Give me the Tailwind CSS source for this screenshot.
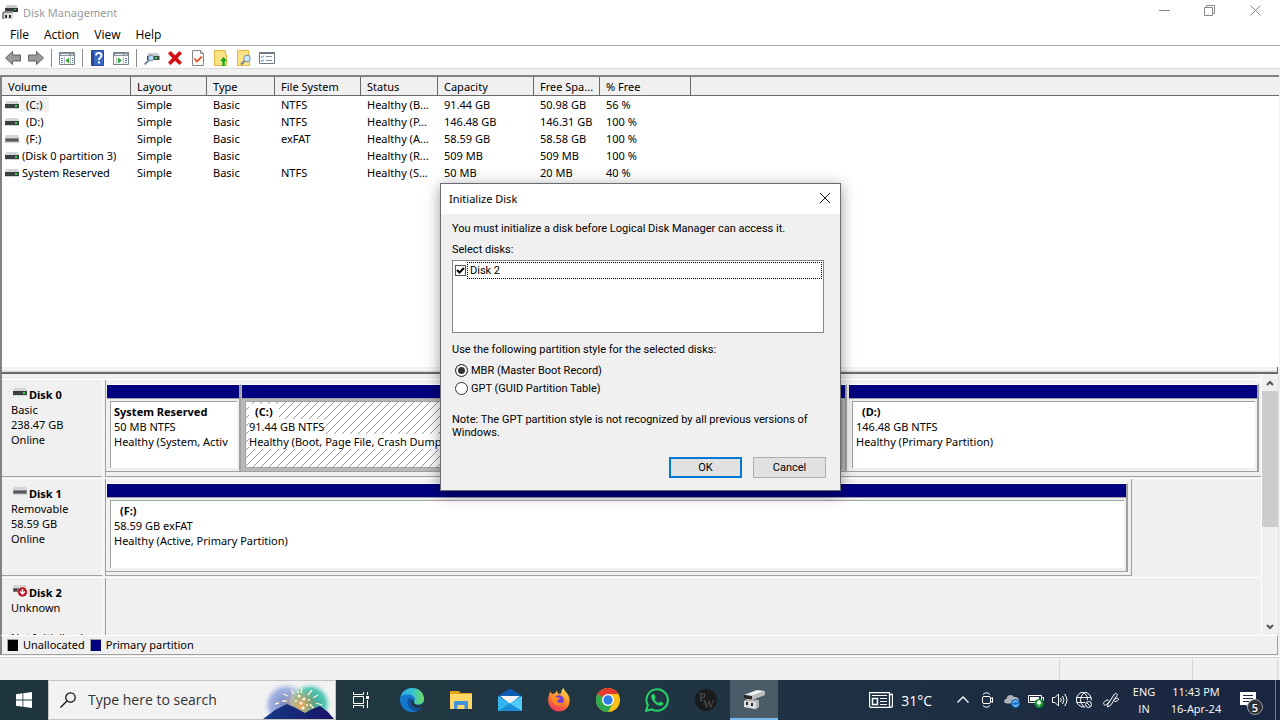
<!DOCTYPE html>
<html lang="en">
<head>
  <meta charset="UTF-8" />
  <meta name="viewport" content="width=device-width, initial-scale=1.0"/>
  <title>Disk Management</title>
  <script src="https://cdn.jsdelivr.net/npm/@tailwindcss/browser@4"></script>
</head>
<body class="h-screen flex flex-col overflow-hidden bg-[#f0f0f0] font-['Noto_Sans','Open_Sans',sans-serif] text-[11px] leading-[15px] text-black">

  <!-- Shared drive icons -->
  <svg class="hidden">
    <symbol id="drive" viewBox="0 0 14 8">
      <path d="M1 0h12l1 3H0z" fill="#d3d5d7"/>
      <path d="M0 3h14v4H0z" fill="#3c3f42"/>
      <path d="M0 7h14v1H0z" fill="#d0d2d4"/>
      <path d="M10 4h2v2h-2z" fill="#2ee04a"/>
    </symbol>
    <symbol id="removable" viewBox="0 0 14 8">
      <path d="M1 0h12l1 3H0z" fill="#d3d5d7"/>
      <path d="M0 3h14v4H0z" fill="#8b8e91"/>
      <path d="M1 4h12v2H1z" fill="#55585a"/>
      <path d="M0 7h14v1H0z" fill="#d0d2d4"/>
    </symbol>
  </svg>

  <!-- Title bar -->
  <header class="flex h-6 shrink-0 items-center bg-white pr-[2px]">
    <svg class="ml-[2px] h-4 w-4" viewBox="0 0 16 16">
      <path d="M5 1h9l2 3H3z" fill="#c9cbcd"/>
      <path d="M3 4h13v4H3z" fill="#37393b"/>
      <path d="M12 5h2v1h-2z" fill="#3fd35a"/>
      <path d="M0 9l2-2h9v8H0z" fill="#8c8c8c"/>
      <path d="M2 9h9v6H2z" fill="#dcdcdc"/>
      <path d="M3 11h2v3H3zM7 11h2v3H7z" fill="#333"/>
    </svg>
    <h1 class="ml-[5px] flex-1 text-[#999]">Disk Management</h1>
    <div class="flex pb-[3px]">
      <button class="flex h-5 w-[46px] items-center justify-center" aria-label="Minimize"><svg class="h-[11px] w-[11px]" viewBox="0 0 11 11" stroke="#888"><path d="M0 5.500h11"/></svg></button>
      <button class="flex h-5 w-[45px] items-center justify-center" aria-label="Restore"><svg class="h-[11px] w-[11px]" viewBox="0 0 11 11" fill="none" stroke="#888"><path d="M.5 2.500h8v8h-8zM2.500 2.500v-2h8v8h-2"/></svg></button>
      <button class="flex h-5 w-[46px] items-center justify-center" aria-label="Close"><svg class="h-[11px] w-[11px]" viewBox="0 0 11 11" stroke="#888"><path d="M.5.5l10 10M10.500.5l-10 10"/></svg></button>
    </div>
  </header>

  <!-- Menu -->
  <nav class="flex h-[22px] shrink-0 items-center gap-[15px] border-b border-[#a8abb0] bg-white pb-px pl-[10px] font-['Open_Sans',sans-serif] text-[12px]">
    <button>File</button>
    <button>Action</button>
    <button>View</button>
    <button>Help</button>
  </nav>

  <!-- Toolbar -->
  <div class="flex h-[23px] shrink-0 items-center border-b border-[#dcdcdc] bg-white pt-px pl-px">
    <button class="flex w-[23px] justify-center" aria-label="Back"><svg class="h-4 w-4" viewBox="0 0 16 16"><path d="M.5 8L7.500 1.500v3.500h8v6h-8v3.500z" fill="#9a9a9a" stroke="#5f5f5f"/></svg></button>
    <button class="flex w-[23px] justify-center" aria-label="Forward"><svg class="h-4 w-4" viewBox="0 0 16 16"><path d="M15.500 8L8.500 1.500v3.500h-8v6h8v3.500z" fill="#9a9a9a" stroke="#5f5f5f"/></svg></button>
    <span class="flex w-2 justify-center"><span class="h-[18px] w-px bg-[#8c8c8c]"></span></span>
    <button class="flex w-[23px] justify-center" aria-label="Console tree">
      <svg class="h-4 w-4" viewBox="0 0 16 16"><path d="M.5 2.500h15v12H.5z" fill="#fff" stroke="#78828c"/><path d="M1 3h14v3H1z" fill="#8b949d"/><path d="M2 4h8v1H2zM12 4h2v1h-2z" fill="#e6ebf0"/><path d="M5.500 7v7M11.500 7v7" stroke="#b4bcc4"/><path d="M2 8.500h2M2 10.500h2M2 12.500h2M13 8.500h1M13 10.500h1M13 12.500h1" stroke="#4d7fc0"/><path d="M10 7.500v6L6.500 10.500z" fill="#2da52d"/></svg>
    </button>
    <span class="flex w-2 justify-center"><span class="h-[18px] w-px bg-[#8c8c8c]"></span></span>
    <button class="flex w-[23px] justify-center" aria-label="Help">
      <svg class="h-4 w-4" viewBox="0 0 16 16"><path d="M1.500.5h12v15h-12z" fill="#3d6cc8" stroke="#27489b"/><path d="M2 1h2v14H2z" fill="#2a4796"/><path d="M6 5.500c0-3.500 5.500-3.500 5.500 0 0 2.500-2.700 2-2.700 4.500" fill="none" stroke="#fff" stroke-width="1.800"/><path d="M8 11.500h2v2H8z" fill="#fff"/></svg>
    </button>
    <button class="flex w-[23px] justify-center" aria-label="Action pane">
      <svg class="h-4 w-4" viewBox="0 0 16 16"><path d="M.5 2.500h15v12H.5z" fill="#fff" stroke="#78828c"/><path d="M1 3h14v3H1z" fill="#8b949d"/><path d="M2 4h8v1H2zM12 4h2v1h-2z" fill="#e6ebf0"/><path d="M3.500 7v7M10.500 7v7" stroke="#b4bcc4"/><path d="M12 8.500h2M12 10.500h2M12 12.500h2" stroke="#4d7fc0"/><path d="M5 7.500v6l4-3z" fill="#2da52d"/></svg>
    </button>
    <span class="flex w-2 justify-center"><span class="h-[18px] w-px bg-[#8c8c8c]"></span></span>
    <button class="flex w-[23px] justify-center" aria-label="Rescan disks">
      <svg class="h-4 w-4" viewBox="0 0 16 16"><path d="M4 3h10l1.500 3H3z" fill="#c8cbce"/><path d="M3 6h12.500v4H3z" fill="#44484c"/><path d="M11 7h2v2h-2z" fill="#2ee04a"/><path d="M.7 14.300L5 10" stroke="#6c7f94" stroke-width="1.800"/><circle cx="7" cy="8" r="2.800" fill="#b8dbf5" stroke="#6b88a5"/></svg>
    </button>
    <button class="flex w-[23px] justify-center" aria-label="Delete"><svg class="h-4 w-4" viewBox="0 0 16 16"><path d="M1 3.500L3.500 1 8 5.300 12.500 1 15 3.500 10.700 8 15 12.500 12.500 15 8 10.700 3.500 15 1 12.500 5.300 8z" fill="#d40f14"/></svg></button>
    <button class="flex w-[23px] justify-center" aria-label="Properties"><svg class="h-4 w-4" viewBox="0 0 16 16"><path d="M2.500.5h8l3 3v12h-11z" fill="#fafafa" stroke="#888"/><path d="M10.500.5v3h3" fill="none" stroke="#888"/><path d="M4.500 8.500l2.500 3L12 6.500" fill="none" stroke="#e8562a" stroke-width="1.800"/></svg></button>
    <button class="flex w-[23px] justify-center" aria-label="Open"><svg class="h-4 w-4" viewBox="0 0 16 16"><path d="M1.500.5h11v4h1v11h-12z" fill="#fbe283" stroke="#e0b93e"/><path d="M10.500 7l3.500 4h-2.200v5H9.300v-5H7z" fill="#18a528"/></svg></button>
    <button class="flex w-[23px] justify-center" aria-label="Explore"><svg class="h-4 w-4" viewBox="0 0 16 16"><path d="M1.500.5h11v4h1v11h-12z" fill="#fbe283" stroke="#e0b93e"/><path d="M5 14.500l4-4" stroke="#6f7f90" stroke-width="1.800"/><circle cx="11" cy="8.500" r="3.300" fill="#cde7f7" stroke="#7b93a8"/></svg></button>
    <button class="flex w-[23px] justify-center" aria-label="Options"><svg class="h-4 w-4" viewBox="0 0 16 16"><path d="M.5 2.500h15v11H.5z" fill="#fff" stroke="#6e7a86"/><path d="M0 2h16v2H0z" fill="#6e7a86"/><path d="M2 6.500l1.200 1L5 5.500M2 10.500l1.200 1L5 9.500" fill="none" stroke="#2a7fd0"/><path d="M7 6.500h6M7 10.500h6" stroke="#8b949d"/></svg></button>
  </div>

  <!-- Volume list -->
  <section class="mt-[6px] mr-px flex-1 overflow-hidden border-t-2 border-l-2 border-[#838383] bg-white">
    <table class="w-full table-fixed border-separate border-spacing-0 text-left">
      <colgroup>
        <col class="w-[129px]"><col class="w-[76px]"><col class="w-[68px]"><col class="w-[86px]"><col class="w-[77px]"><col class="w-[96px]"><col class="w-[66px]"><col class="w-[91px]"><col>
      </colgroup>
      <thead>
        <tr class="h-[19px] bg-[#f0f0f0]">
          <th class="border-r border-b border-[#696969] px-[6px] font-normal">Volume</th>
          <th class="border-r border-b border-[#696969] px-[6px] font-normal">Layout</th>
          <th class="border-r border-b border-[#696969] px-[6px] font-normal">Type</th>
          <th class="border-r border-b border-[#696969] px-[6px] font-normal">File System</th>
          <th class="border-r border-b border-[#696969] px-[6px] font-normal">Status</th>
          <th class="border-r border-b border-[#696969] px-[6px] font-normal">Capacity</th>
          <th class="border-r border-b border-[#696969] pl-[6px] font-normal whitespace-nowrap">Free Spa...</th>
          <th class="border-r border-b border-[#696969] px-[6px] font-normal">% Free</th>
          <th class="border-b border-[#696969]"></th>
        </tr>
      </thead>
      <tbody>
        <tr class="h-[17px]">
          <td class="pl-[3px]"><div class="flex items-center"><svg class="h-2 w-[14px]"><use href="#drive"/></svg><span class="ml-px bg-[#f0f0f0] px-[6px]">(C:)</span></div></td>
          <td class="px-[6px]">Simple</td><td class="px-[6px]">Basic</td><td class="px-[6px]">NTFS</td>
          <td class="pl-[6px] whitespace-nowrap">Healthy (B...</td><td class="px-[6px]">91.44 GB</td><td class="pl-[6px] whitespace-nowrap">50.98 GB</td><td class="px-[6px]">56 %</td><td></td>
        </tr>
        <tr class="h-[17px]">
          <td class="pl-[3px]"><div class="flex items-center"><svg class="h-2 w-[14px]"><use href="#drive"/></svg><span class="ml-px px-[6px]">(D:)</span></div></td>
          <td class="px-[6px]">Simple</td><td class="px-[6px]">Basic</td><td class="px-[6px]">NTFS</td>
          <td class="pl-[6px] whitespace-nowrap">Healthy (P...</td><td class="px-[6px]">146.48 GB</td><td class="pl-[6px] whitespace-nowrap">146.31 GB</td><td class="px-[6px]">100 %</td><td></td>
        </tr>
        <tr class="h-[17px]">
          <td class="pl-[3px]"><div class="flex items-center"><svg class="h-2 w-[14px]"><use href="#removable"/></svg><span class="ml-px px-[6px]">(F:)</span></div></td>
          <td class="px-[6px]">Simple</td><td class="px-[6px]">Basic</td><td class="px-[6px]">exFAT</td>
          <td class="pl-[6px] whitespace-nowrap">Healthy (A...</td><td class="px-[6px]">58.59 GB</td><td class="pl-[6px] whitespace-nowrap">58.58 GB</td><td class="px-[6px]">100 %</td><td></td>
        </tr>
        <tr class="h-[17px]">
          <td class="pl-[3px]"><div class="flex items-center"><svg class="h-2 w-[14px] shrink-0"><use href="#drive"/></svg><span class="ml-[3px] whitespace-nowrap">(Disk 0 partition 3)</span></div></td>
          <td class="px-[6px]">Simple</td><td class="px-[6px]">Basic</td><td></td>
          <td class="pl-[6px] whitespace-nowrap">Healthy (R...</td><td class="px-[6px]">509 MB</td><td class="pl-[6px] whitespace-nowrap">509 MB</td><td class="px-[6px]">100 %</td><td></td>
        </tr>
        <tr class="h-[17px]">
          <td class="pl-[3px]"><div class="flex items-center"><svg class="h-2 w-[14px]"><use href="#drive"/></svg><span class="ml-[3px] whitespace-nowrap">System Reserved</span></div></td>
          <td class="px-[6px]">Simple</td><td class="px-[6px]">Basic</td><td class="px-[6px]">NTFS</td>
          <td class="pl-[6px] whitespace-nowrap">Healthy (S...</td><td class="px-[6px]">50 MB</td><td class="pl-[6px] whitespace-nowrap">20 MB</td><td class="px-[6px]">40 %</td><td></td>
        </tr>
      </tbody>
    </table>
  </section>

  <!-- Splitter -->
  <div class="mr-[2px] h-[7px] shrink-0 border-r border-b-2 border-l-2 border-[#696969] border-l-[#838383] bg-[#f0f0f0] pt-[2px]"><div class="h-px bg-white"></div><div class="h-[2px] bg-[#e3e3e3]"></div></div>

  <!-- Graphical view -->
  <main class="mr-px flex h-[261px] shrink-0 border-l-2 border-[#838383]">
    <div class="mt-[5px] flex-1 overflow-hidden">

      <!-- Disk 0 -->
      <div class="flex h-[98px] border-t border-white">
        <div class="w-[101px] border-r border-b border-r-white border-b-[#a0a0a0] pt-[7px] pl-[9px]">
          <div class="flex font-bold"><svg class="mt-px mr-[2px] ml-[2px] h-2 w-[14px]"><use href="#drive"/></svg>Disk 0</div>
          <p>Basic</p><p>238.47 GB</p><p>Online</p>
        </div>
        <div class="ml-[2px] flex flex-1 border-b border-l border-[#a0a0a0] pt-[4px] pb-[4px]">
          <div class="flex w-[135px] flex-col border-r-2 border-b border-[#a0a0a0] border-t border-t-white pl-px">
            <div class="h-[14px] border-b border-[#a0a0a0] bg-[#000080]"></div>
            <div class="mt-[2px] mr-[2px] mb-[3px] ml-[3px] flex-1 overflow-hidden border-t border-l border-[#a0a0a0] bg-white pt-[2px] pl-[3px] whitespace-nowrap">
              <p class="font-bold">System Reserved</p><p>50 MB NTFS</p><p>Healthy (System, Activ</p>
            </div>
          </div>
          <div class="flex w-[606px] flex-col border-r-2 border-b border-[#a0a0a0] border-t border-t-white bg-[#b8b8b8] pl-px">
            <div class="h-[14px] border-b border-[#a0a0a0] bg-[#000080]"></div>
            <div class="relative mt-[2px] mr-[3px] mb-[3px] ml-[3px] flex-1 overflow-hidden border border-[#a0a0a0] bg-white pt-[2px] pl-[3px] whitespace-nowrap">
              <svg class="absolute inset-0 h-full w-full"><defs><pattern id="hatch" width="8" height="8" patternUnits="userSpaceOnUse"><path d="M-1 9L9-1M-1 1L1-1M7 9L9 7" stroke="#999" stroke-width="1"/></pattern></defs><rect width="100%" height="100%" fill="url(#hatch)"/></svg>
              <p class="relative font-bold"><span class="bg-white px-[6px]">(C:)</span></p><p class="relative"><span class="bg-white">91.44 GB NTFS</span></p><p class="relative"><span class="bg-white">Healthy (Boot, Page File, Crash Dump, Primary Partition)</span></p>
            </div>
          </div>
          <div class="flex flex-1 flex-col border-r-2 border-b border-[#a0a0a0] border-t border-t-white pl-[2px]">
            <div class="h-[14px] border-b border-[#a0a0a0] bg-[#000080]"></div>
            <div class="mt-[2px] mr-[2px] mb-[3px] ml-[3px] flex-1 overflow-hidden border-t border-l border-[#a0a0a0] bg-white pt-[2px] pl-[3px] whitespace-nowrap">
              <p class="pl-[6px] font-bold">(D:)</p><p>146.48 GB NTFS</p><p>Healthy (Primary Partition)</p>
            </div>
          </div>
          <div class="w-[2px]"></div>
        </div>
      </div>

      <!-- Disk 1 -->
      <div class="mt-px flex h-[98px] border-t border-white">
        <div class="w-[101px] border-r border-b border-r-white border-b-[#a0a0a0] pt-[7px] pl-[9px]">
          <div class="flex font-bold"><svg class="mt-px mr-[2px] ml-[2px] h-2 w-[14px]"><use href="#removable"/></svg>Disk 1</div>
          <p>Removable</p><p>58.59 GB</p><p>Online</p>
        </div>
        <div class="ml-[2px] flex flex-1 border-l border-[#a0a0a0]">
          <div class="flex flex-1 border-r border-b border-[#a0a0a0] pt-[4px] pr-[3px] pb-[3px]">
            <div class="flex flex-1 flex-col border-r-2 border-b border-[#a0a0a0] border-t border-t-white pl-px">
              <div class="h-[14px] border-b border-[#a0a0a0] bg-[#000080]"></div>
              <div class="mt-[2px] mr-[2px] mb-[3px] ml-[3px] flex-1 overflow-hidden border-t border-l border-[#a0a0a0] bg-white pt-[2px] pl-[3px] whitespace-nowrap">
                <p class="pl-[6px] font-bold">(F:)</p><p>58.59 GB exFAT</p><p>Healthy (Active, Primary Partition)</p>
              </div>
            </div>
          </div>
          <div class="w-[129px]"></div>
        </div>
      </div>

      <!-- Disk 2 -->
      <div class="mt-px flex h-[98px] border-t border-white">
        <div class="w-[101px] border-r border-white pt-[7px] pl-[9px]">
          <div class="flex font-bold">
            <svg class="mr-px ml-[2px] h-3 w-[15px]" viewBox="0 0 15 12"><path d="M1 0h12v3H0z" fill="#d3d5d7"/><path d="M0 3h6v4H0z" fill="#777a7d"/><path d="M1 4h3v2H1z" fill="#3c3f42"/><circle cx="9.500" cy="7" r="4.700" fill="#c01020"/><path d="M9.500 4v4M7 6.500l2.500 2.500L12 6.500" fill="none" stroke="#fff" stroke-width="1.500"/></svg>Disk 2
          </div>
          <p>Unknown</p><p>&nbsp;</p><p>Not Initialized</p>
        </div>
        <div class="ml-[2px] flex-1 border-l border-[#a0a0a0]"></div>
      </div>
    </div>

    <!-- Scroll bar -->
    <div class="flex w-[18px] flex-col border-x border-l-white border-r-[#e3e3e3] bg-[#f0f0f0]">
      <button class="flex h-[17px] items-center justify-center" aria-label="Scroll up"><svg class="h-[6px] w-2" viewBox="0 0 8 6" fill="none" stroke="#555" stroke-width="2"><path d="M1 5l3-3 3 3"/></svg></button>
      <div class="h-[136px] bg-[#cdcdcd]"></div>
      <div class="flex-1"></div>
      <button class="flex h-[17px] items-center justify-center" aria-label="Scroll down"><svg class="h-[6px] w-2" viewBox="0 0 8 6" fill="none" stroke="#555" stroke-width="2"><path d="M1 1l3 3 3-3"/></svg></button>
    </div>
  </main>

  <!-- Legend -->
  <div class="mr-[2px] flex h-5 shrink-0 items-center border-t border-r border-b border-l-2 border-t-white border-r-[#a0a0a0] border-b-[#a0a0a0] border-l-[#838383] pb-px pl-[5px]">
    <span class="h-3 w-[11px] border-t border-l border-[#a0a0a0] bg-black"></span><span class="ml-[5px]">Unallocated</span>
    <span class="ml-[5px] h-3 w-[11px] border-t border-l border-[#a0a0a0] bg-[#000080]"></span><span class="ml-[5px]">Primary partition</span>
  </div>

  <!-- Status bar -->
  <footer class="mt-px flex h-[24px] shrink-0 border-t border-white">
    <div class="flex flex-1 border-t border-[#d7d7d7] pt-px">
      <div class="flex-1 border-r border-[#d7d7d7]"></div>
      <div class="w-[133px] border-r border-[#d7d7d7]"></div>
      <div class="w-[85px] border-r border-[#d7d7d7]"></div>
      <div class="w-[2px]"></div>
    </div>
  </footer>

  <!-- Taskbar -->
  <div class="flex h-10 shrink-0 items-stretch bg-linear-to-r from-[#20363f] via-[#203643] to-[#1a2541] font-['Open_Sans',sans-serif] text-white">
    <button class="flex w-12 items-center justify-center" aria-label="Start"><svg class="h-4 w-4" viewBox="0 0 16 16" fill="#fff"><path d="M0 2.200L6.500 1.300v6.200H0zM7.300 1.200L16 0v7.500H7.300zM0 8.400h6.500v6.300L0 13.800zM7.300 8.400H16V16l-8.700-1.200z"/></svg></button>
    <label class="flex w-[288px] items-center border border-[#c4c4c4] bg-[#f2f2f2] pl-[11px] text-black">
      <svg class="h-4 w-4" viewBox="0 0 16 16" fill="none" stroke="#111" stroke-width="1.300"><circle cx="10.500" cy="5.500" r="4.700"/><path d="M7.200 8.800L.5 15.500"/></svg>
      <input type="text" placeholder="Type here to search" aria-label="Search" class="ml-3 w-0 flex-1 text-[14px] leading-5 outline-none placeholder:text-[#333]">
      <svg class="h-[38px] w-[72px]" viewBox="0 0 72 38">
        <defs>
          <radialGradient id="glow"><stop offset="0" stop-color="#f0a860"/><stop offset="1" stop-color="#f0a860" stop-opacity="0"/></radialGradient>
          <radialGradient id="skyLeft"><stop offset="0" stop-color="#6f84bd"/><stop offset=".7" stop-color="#a4b4e2"/><stop offset="1" stop-color="#dfe4f2" stop-opacity="0"/></radialGradient>
          <radialGradient id="skyRight"><stop offset="0" stop-color="#229a8b"/><stop offset=".7" stop-color="#5cc8b6"/><stop offset="1" stop-color="#d5efeb" stop-opacity="0"/></radialGradient>
          <linearGradient id="hill"><stop offset="0" stop-color="#143d85"/><stop offset="1" stop-color="#1b1066"/></linearGradient>
        </defs>
        <circle cx="23" cy="24" r="23" fill="url(#skyLeft)"/>
        <circle cx="47" cy="23" r="22" fill="url(#skyRight)"/>
        <circle cx="38" cy="24" r="17" fill="url(#glow)"/>
        <g stroke="#fff4d6" stroke-width="1.300"><path d="M31 13l-3-4M25 15l-5-2M24 20h-5M16 22l-4 1M38 12l1-5M45 14l4-5M50 17l5-3M53 22l6 2M47 23l4 5"/></g>
        <g fill="#fff4d6"><circle cx="36" cy="15" r="1.500"/><circle cx="41" cy="18" r="1.500"/><circle cx="33" cy="20" r="1"/><circle cx="38" cy="22" r="1.500"/><circle cx="44" cy="24" r="1"/><circle cx="40" cy="27" r="1.500"/><circle cx="35" cy="11" r="1"/><circle cx="46" cy="19" r="1"/></g>
        <path d="M0 38l12-9 12-6 9 4 9 5 7-4 8-3 8 6 6 7z" fill="url(#hill)"/>
      </svg>
    </label>
    <button class="flex w-[51px] items-center justify-center pr-[2px]" aria-label="Task view"><svg class="h-4 w-4" viewBox="0 0 16 16" fill="none" stroke="#fff"><path d="M.5 0v2.500h10V0M.5 4.500h10v7H.5zM.5 16v-2.500h10V16M14.500 0v3M14.500 8v8"/><path d="M13 4h3v3h-3z" fill="#fff" stroke="none"/></svg></button>

    <button class="flex w-[49px] items-center justify-center" aria-label="Edge">
      <svg class="h-6 w-6" viewBox="0 0 24 24"><defs><linearGradient id="edgeTop"><stop offset="0" stop-color="#29a8e8"/><stop offset=".5" stop-color="#37c4cf"/><stop offset="1" stop-color="#70dc5c"/></linearGradient></defs>
        <circle cx="12" cy="12" r="12" fill="#1478cf"/><path d="M.5 9C2 3.500 6.500 0 12 0c7 0 12 5 12 10.500 0 4-3 6-6 6-2.500 0-4-1-4-2 0-.8 1-1.200 1-3C15 8.500 12 6.500 8.500 6.500 5 6.500 2 7 .5 9z" fill="url(#edgeTop)"/><path d="M9 10c-3 3.500-1.500 9.500 3 12 4 2 8 .5 10.500-3.500-5 2-9.500.5-11-3-.8-2-.3-3.500.5-4.500-1-.9-2-1.500-3-1z" fill="#164f9e"/><path d="M14 14.500c0 1.500 2 2.500 4.500 2.500 2 0 4.500-1 5.500-3l-1.500 5c-5 2-9.500.5-11-3-.7-2-.2-3.500.7-4.500 1 .5 1.300 1 1.800 3z" fill="#20363f"/></svg>
    </button>
    <button class="flex w-[49px] items-center justify-center" aria-label="File Explorer">
      <svg class="h-6 w-6" viewBox="0 0 24 24"><path d="M1 3h9l1.500 2H23v3H1z" fill="#e2a315"/><path d="M1 6h22v15H1z" fill="#ffd868"/><path d="M5 21v-6.500c0-1 .5-1.500 1.500-1.500h11c1 0 1.500.5 1.500 1.500V21h-3.500v-4h-7v4z" fill="#3e94dc"/></svg>
    </button>
    <button class="flex w-[49px] items-center justify-center" aria-label="Mail">
      <svg class="h-6 w-6" viewBox="0 0 24 24"><path d="M0 8L12 .5 24 8v6H0z" fill="#0d5db5"/><path d="M2 8h20l-10 8z" fill="#f2f2f2"/><path d="M0 8l12 7.500L24 8v15H0z" fill="#35b5ed"/><path d="M24 8v15H0z" fill="#50cbf7"/><path d="M0 23l12-7.500L24 23z" fill="#1a8ddd"/></svg>
    </button>
    <button class="flex w-[49px] items-center justify-center" aria-label="Firefox">
      <svg class="h-6 w-6" viewBox="0 0 24 24"><defs><linearGradient id="fox" x1=".8" y1="0" x2=".3" y2="1"><stop offset="0" stop-color="#ffe14a"/><stop offset=".5" stop-color="#ff8a2b"/><stop offset="1" stop-color="#ef2d5d"/></linearGradient></defs>
        <path d="M3 3.500l2.500 2.500 3-1 1-2.500 2 3.500 3-1c-.5-2 .5-4 2-5 .5 3 3.500 4.500 5 7.500 3.500 7.500-1 16-10 16C4 23.500-1 15 2 7z" fill="url(#fox)"/><circle cx="12" cy="12.300" r="5" fill="#7a3fd5"/><path d="M4.500 9c2-1.500 4.500-.5 5.500.5l3 .5c0 1.500-3 1.500-3 3 1 2.500 4 2.500 6.500 1.500-2 4-9 4-11-1z" fill="#ff8b23"/></svg>
    </button>
    <button class="flex w-[49px] items-center justify-center" aria-label="Chrome">
      <svg class="h-6 w-6" viewBox="0 0 24 24"><circle cx="12" cy="12" r="12" fill="#fbc116"/><path d="M12 12L1.600 6A12 12 0 0 1 22.400 6H12z" fill="#e33b2e"/><path d="M1.600 6A12 12 0 0 0 12 24l5.200-9L12 12 6.800 15z" fill="#2da94f"/><path d="M1.600 6l5.200 9L12 8V6z" fill="#2da94f"/><path d="M1.600 6H12v6L6.800 9z" fill="#e33b2e"/><circle cx="12" cy="12" r="6" fill="#fff"/><circle cx="12" cy="12" r="4.700" fill="#2f7de9"/></svg>
    </button>
    <button class="flex w-[49px] items-center justify-center" aria-label="WhatsApp">
      <svg class="h-6 w-6" viewBox="0 0 24 24"><path d="M1.200 22.800l1.600-5.700A10.700 10.700 0 1 1 7 21.300z" fill="none" stroke="#25d366" stroke-width="2"/><path d="M8 5.800c-2.200 1-2.200 3.600-.8 6 2 3.400 5.200 6.200 8.800 5.900 1.500-.3 2.500-1.300 2.300-2.800l-3-1.500-1.600 1.700c-2-.8-3.300-2.200-4.200-3.900L10.700 10 9.300 6.300z" fill="#25d366"/></svg>
    </button>
    <button class="flex w-[49px] items-center justify-center" aria-label="PW">
      <svg class="h-6 w-6" viewBox="0 0 24 24"><circle cx="12" cy="12" r="11" fill="#1b1b1d"/><text x="5" y="13" font-family="Liberation Serif" font-size="12" fill="#555">P</text><text x="9" y="20" font-family="Liberation Serif" font-size="12" fill="#555">W</text></svg>
    </button>
    <button class="flex w-12 items-center justify-center border-b-2 border-[#76b9ed] bg-[#4b5c69]" aria-label="Disk Management">
      <svg class="h-6 w-6" viewBox="0 0 24 24"><path d="M2 8L15 3l8 1-13 5z" fill="#f0f0f0"/><path d="M2 8l8 1v4l-8-2z" fill="#292929"/><path d="M10 9l13-5v4l-13 5z" fill="#bcbcbc"/><path d="M2 14l3-2 12 1v7l-3 2-12-2z" fill="#b4b4b4"/><path d="M2 14l12 1v7L2 20z" fill="#dcdcdc"/><path d="M4 15h2v3H4zM9 16h2v3H9z" fill="#292929"/></svg>
    </button>

    <div class="flex-1"></div>

    <!-- Tray -->
    <button class="flex items-center text-[14px]">
      <svg class="mr-2 h-4 w-6" viewBox="0 0 24 16" fill="none" stroke="#fff"><path d="M.5.5h20v15H2.500c-1.500 0-2-1-2-2zM20.500 2.500h3v11c0 1.500-1 2-3 2" stroke-width="1.300"/><path d="M3 3.500h15M11 6.500h7M11 9.500h7M11 12.500h7"/><path d="M3.500 6.500h5v6h-5z" stroke-width="1.500"/></svg>
      31°C
    </button>
    <div class="ml-[24px] flex items-center gap-2">
      <button aria-label="Show hidden icons"><svg class="h-4 w-[14px]" viewBox="0 0 14 16" fill="none" stroke="#fff" stroke-width="1.300"><path d="M1.500 10.500L7 5l5.500 5.500"/></svg></button>
      <button class="ml-[2px]" aria-label="Meet now"><svg class="h-4 w-4" viewBox="0 0 16 16" fill="none" stroke="#fff"><rect x="2.500" y="4.500" width="8" height="7" rx="1.500"/><path d="M10.500 7l2-1.500v5l-2-1.500M3 2.500Q6.500-1 10 2.500M3 13.500q3.500 3.500 7 0"/></svg></button>
      <button aria-label="OneDrive"><svg class="h-4 w-4" viewBox="0 0 16 16"><path d="M3 11.500C-1 11.500-.5 7 2.500 7 3 2.500 8 1.500 10 5c3-.5 5 1 5 3.500v3z" fill="#aeb4ba"/><circle cx="11.500" cy="11.500" r="4.500" fill="#1271cf"/><path d="M9 11c.5-2.500 4-2.500 4.500-.5M14 12c-.5 2.500-4 2.500-4.500.5" fill="none" stroke="#fff"/></svg></button>
      <button aria-label="Battery"><svg class="h-4 w-4" viewBox="0 0 16 16"><path d="M.5 3.500h13v7H.5zM14 5.500h1.500v3" fill="none" stroke="#fff"/><path d="M2 5h9v4H2z" fill="#fff"/><circle cx="11" cy="11.500" r="4.500" fill="#149331"/><path d="M11 14.500v-3M9.500 12c-1-2 .5-3 1.500-3.500 1 .5 2.500 1.500 1.500 3.500z" fill="#fff" stroke="#fff" stroke-width=".7"/></svg></button>
      <button aria-label="Volume"><svg class="h-4 w-4" viewBox="0 0 16 16" fill="none" stroke="#fff"><path d="M.5 5.500H3l3.500-3.500v12L3 10.500H.5zM8.500 6q1.500 2 0 4M10.500 4q3 4 0 8M12.500 2q5 6 0 12"/></svg></button>
      <button aria-label="Network"><svg class="h-4 w-4" viewBox="0 0 16 16" fill="none" stroke="#fff"><path d="M9 15A7.500 7.500 0 1 1 15.300 8.500M.7 5.500h14M.7 10.500H9M8 .5Q1 8 8 15M8 .5q4 3.500 3.500 7.500"/><circle cx="12.500" cy="12.500" r="3"/><path d="M10.500 10.500l4 4"/></svg></button>
      <button class="ml-[3px]" aria-label="Ink"><svg class="h-4 w-4" viewBox="0 0 16 16" fill="none" stroke="#fff"><path d="M5 12L11.500 2c1-1.500 3.500 0 2.500 1.500L7.500 13.500 4.500 15zM5.500 8C1 8-.5 12 1.500 13c2.500 1 4-4 6.500-5M10 8.500c3-2.500 5-3 5.500-1.500s-2 2.500-4 2.500"/></svg></button>
    </div>
    <button class="ml-[13px] flex w-6 flex-col items-center justify-center gap-[2px] text-[11px]"><span>ENG</span><span>IN</span></button>
    <button class="ml-[10px] flex w-[60px] flex-col items-center justify-center gap-[2px] text-[11px] whitespace-nowrap"><span>11:43 PM</span><span>16-Apr-24</span></button>
    <button class="relative ml-[14px] w-[26px]" aria-label="Notifications">
      <svg class="absolute top-3 left-0 h-4 w-4" viewBox="0 0 16 16"><path d="M0 0h16v13H9v3l-3-3H0z" fill="#fff"/><path d="M3 3.500h10M3 6.500h10M3 9.500h6" stroke="#1a2541"/></svg>
      <span class="absolute top-[19px] left-[7px] flex h-4 w-4 items-center justify-center rounded-full border border-[#999] bg-[#2c3136] text-[11px] font-semibold">5</span>
    </button>
    <div class="ml-[9px] w-[5px] border-l border-[#71798a]"></div>
  </div>

  <!-- Initialize Disk dialog -->
  <form role="dialog" aria-labelledby="dialog-title" class="absolute top-[183px] left-1/2 ml-[-200px] w-[401px] border border-[#6b6b70] bg-[#f0f0f0] pb-[12px] font-['Roboto','Liberation_Sans',sans-serif] leading-[13px] shadow-[0_3px_14px_rgba(0,0,0,0.4)]">
    <div class="flex h-[30px] items-center justify-between bg-white pr-[9px] pb-[2px] pl-2 font-['Noto_Sans','Open_Sans',sans-serif] leading-[15px]">
      <h2 id="dialog-title">Initialize Disk</h2>
      <button type="button" aria-label="Close"><svg class="h-3 w-3" viewBox="0 0 12 12" stroke="#111"><path d="M1 1l10 10M11 1L1 11"/></svg></button>
    </div>
    <div class="px-[11px] pt-2">
      <p>You must initialize a disk before Logical Disk Manager can access it.</p>
      <p class="mt-2">Select disks:</p>
      <div class="mt-[4px] mr-[5px] h-[73px] border border-[#82868f] bg-white p-px">
        <label class="flex items-center">
          <span class="mr-px ml-px grid">
            <input type="checkbox" checked class="peer col-start-1 row-start-1 h-[11px] w-[11px] appearance-none border border-[#555] bg-white">
            <svg class="invisible col-start-1 row-start-1 h-[11px] w-[11px] peer-checked:visible" viewBox="0 0 11 11" fill="none" stroke="#000" stroke-width="2"><path d="M2 5l2.500 2.500L9 3"/></svg>
          </span>
          <span class="h-[17px] flex-1 border border-dotted border-black pt-px pl-[2px]">Disk 2</span>
        </label>
      </div>
      <fieldset class="mt-[10px]">
        <legend>Use the following partition style for the selected disks:</legend>
        <label class="mt-[7px] flex h-[14px] items-center pl-[3px]"><input type="radio" name="style" checked class="mr-[3px] h-[13px] w-[13px] appearance-none rounded-full border border-[#333] bg-white checked:bg-[#333] checked:shadow-[inset_0_0_0_2px_white]">MBR (Master Boot Record)</label>
        <label class="mt-[4px] flex h-[14px] items-center pl-[3px]"><input type="radio" name="style" class="mr-[3px] h-[13px] w-[13px] appearance-none rounded-full border border-[#333] bg-white checked:bg-[#333] checked:shadow-[inset_0_0_0_2px_white]">GPT (GUID Partition Table)</label>
      </fieldset>
      <p class="mt-[18px]">Note: The GPT partition style is not recognized by all previous versions of Windows.</p>
      <div class="mt-[18px] mr-[3px] flex justify-end gap-[11px]">
        <button type="submit" class="h-[21px] w-[73px] border-2 border-[#0078d7] bg-[#e1e1e1]">OK</button>
        <button type="button" class="h-[21px] w-[73px] border border-[#adadad] bg-[#e1e1e1]">Cancel</button>
      </div>
    </div>
  </form>

</body>
</html>
